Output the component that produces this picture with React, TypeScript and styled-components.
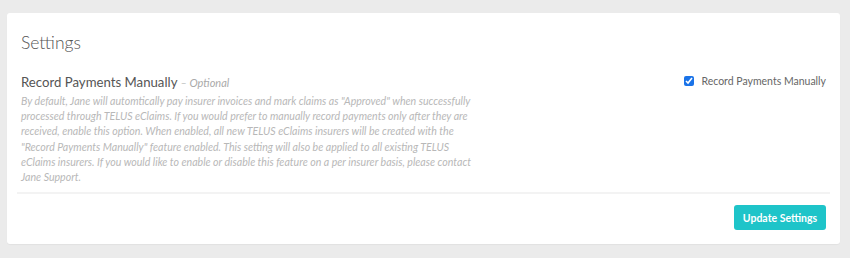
import styled, { createGlobalStyle } from 'styled-components';

const GlobalStyle = createGlobalStyle`
  html, body {
    margin: 0;
    padding: 0;
    background: #ebebeb;
  }
  body {
    font-family: Lato, "Open Sans", Arial, sans-serif;
    color: #444;
  }
`;

const Page = styled.div`
  padding: 13px 10px 14px 7px;
`;

const Card = styled.div`
  background: #fff;
  border-radius: 3px;
  box-shadow: 0 1px 1px rgba(0, 0, 0, 0.04);
  padding: 18px 10px 14px 10px;
`;

const Title = styled.h2`
  margin: 0;
  padding: 0 4px;
  font-size: 17.5px;
  font-weight: 300;
  color: #555;
  line-height: 24px;
`;

const SettingRow = styled.div`
  display: flex;
  justify-content: space-between;
  align-items: flex-start;
  margin-top: 18px;
  padding: 0 4px 7px 4px;
  border-bottom: 2px solid #f3f3f3;
`;

const Info = styled.div`
  width: 500px;
`;

const Label = styled.div`
  font-size: 13.2px;
  color: #555;
  line-height: 18px;
  margin-bottom: 2px;
`;

const Optional = styled.span`
  font-style: italic;
  font-size: 11px;
  color: #aaa;
`;

const Help = styled.p`
  margin: 0;
  font-size: 10.6px;
  font-style: italic;
  line-height: 15.2px;
  color: #b8b8b8;
`;

const CheckLabel = styled.label`
  display: flex;
  align-items: center;
  gap: 7px;
  margin-top: 2px;
  font-size: 10.5px;
  color: #666;
  cursor: pointer;
  input {
    margin: 0;
    width: 10px;
    height: 10px;
    accent-color: #1a73e8;
  }
`;

const Footer = styled.div`
  display: flex;
  justify-content: flex-end;
  padding: 11px 4px 0 4px;
`;

const Button = styled.button`
  background: #1ec4c9;
  color: #fff;
  border: none;
  border-radius: 3px;
  font-family: inherit;
  font-size: 10.5px;
  font-weight: 700;
  height: 25px;
  width: 92px;
  padding: 0;
  cursor: pointer;
`;

const helpLines = [
  'By default, Jane will automtically pay insurer invoices and mark claims as "Approved" when successfully',
  'processed through TELUS eClaims. If you would prefer to manually record payments only after they are',
  'received, enable this option. When enabled, all new TELUS eClaims insurers will be created with the',
  '"Record Payments Manually" feature enabled. This setting will also be applied to all existing TELUS',
  'eClaims insurers. If you would like to enable or disable this feature on a per insurer basis, please contact',
  'Jane Support.',
];

export default function App() {
  return (
    <>
      <GlobalStyle />
      <Page>
        <Card>
          <Title>Settings</Title>
          <SettingRow>
            <Info>
              <Label>
                Record Payments Manually <Optional>– Optional</Optional>
              </Label>
              <Help>
                {helpLines.map((line, i) => (
                  <span key={i}>
                    {line}
                    {i < helpLines.length - 1 && <br />}
                  </span>
                ))}
              </Help>
            </Info>
            <CheckLabel>
              <input type="checkbox" defaultChecked />
              Record Payments Manually
            </CheckLabel>
          </SettingRow>
          <Footer>
            <Button>Update Settings</Button>
          </Footer>
        </Card>
      </Page>
    </>
  );
}
